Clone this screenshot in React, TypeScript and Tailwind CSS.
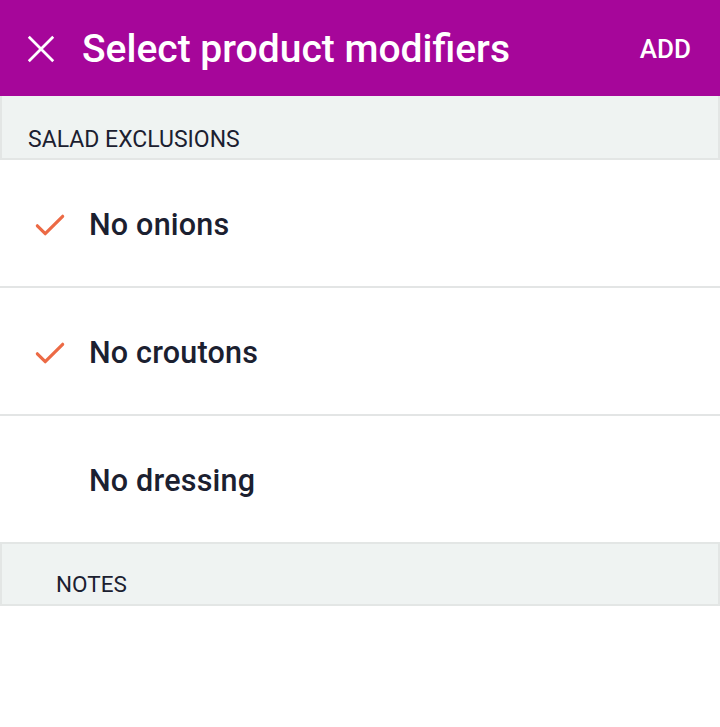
import React from "react";

const Check = () => (
  <svg width="38" height="38" viewBox="0 0 24 24" fill="none" stroke="#ec6a45" strokeWidth="2" strokeLinecap="round" strokeLinejoin="round">
    <path d="M4 12.5l5 5L20 6.5" />
  </svg>
);

const Row = ({ label, checked }: { label: string; checked: boolean }) => (
  <div className="flex h-[128px] items-center border-b-2 border-[#e3e5e5] bg-white pt-[4px]">
    <div className="flex w-[89px] items-center pl-[31px]">{checked ? <Check /> : null}</div>
    <span className="text-[30.5px] font-medium tracking-[0.2px] text-[#1b2030]">{label}</span>
  </div>
);

export default function App() {
  return (
    <div className="h-[727px] w-[720px] bg-white" style={{ fontFamily: "Roboto, 'Liberation Sans', sans-serif" }}>
      <div className="flex h-[96px] items-center bg-[#a6069a] pt-[2px] text-white">
        <div className="flex w-[82px] items-center pl-[26px]">
          <svg width="30" height="30" viewBox="0 0 24 24" fill="none" stroke="white" strokeWidth="2.2" strokeLinecap="square">
            <path d="M3 3L21 21M21 3L3 21" />
          </svg>
        </div>
        <span className="text-[39px] font-medium leading-none">Select product modifiers</span>
        <span className="ml-auto pr-[29px] text-[26px] font-medium">ADD</span>
      </div>
      <div className="flex h-[64px] items-end border-x-2 border-b-2 border-[#e3e6e5] bg-[#eff3f2] pb-[1px] pl-[26px]">
        <span className="text-[23px] text-[#1b2030]">SALAD EXCLUSIONS</span>
      </div>
      <Row label="No onions" checked />
      <Row label="No croutons" checked />
      <div className="flex h-[126px] items-center bg-white pt-[4px]">
        <div className="w-[89px]" />
        <span className="text-[30.5px] font-medium tracking-[0.2px] text-[#1b2030]">No dressing</span>
      </div>
      <div className="flex h-[64px] items-center border-2 border-[#e3e6e5] bg-[#eff3f2] pl-[54px] pt-[22px]">
        <span className="text-[22.5px] text-[#1b2030]">NOTES</span>
      </div>
    </div>
  );
}
